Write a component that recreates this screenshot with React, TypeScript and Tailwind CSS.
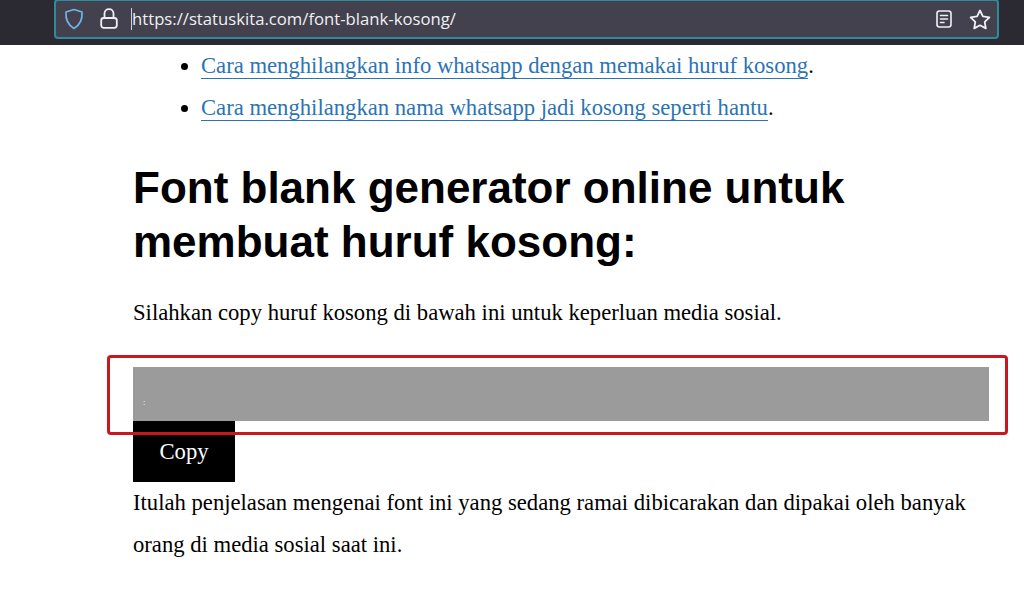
function ShieldIcon() {
  return (
    <svg width="20" height="22" viewBox="0 0 20 22" fill="none" stroke="#6fb6e6" strokeWidth="1.7" strokeLinejoin="round">
      <path d="M10 1.5 L18 4 C18.5 11 16 17 10 20.5 C4 17 1.5 11 2 4 Z" />
    </svg>
  );
}

function LockIcon() {
  return (
    <svg width="18" height="21" viewBox="0 0 18 21" fill="none" stroke="#f0f0f4" strokeWidth="1.8">
      <path d="M4.5 10 V5.5 C4.5 3 6.5 1.2 9 1.2 C11.5 1.2 13.5 3 13.5 5.5 V10" />
      <rect x="1.2" y="10" width="15.6" height="9.8" rx="2.5" />
    </svg>
  );
}

function ReaderIcon() {
  return (
    <svg width="16" height="18" viewBox="0 0 16 18" fill="none" stroke="#f0f0f4" strokeWidth="1.6" strokeLinecap="round">
      <rect x="1" y="1" width="14" height="16" rx="2.5" />
      <path d="M4.5 5.5 H11.5 M4.5 9 H11.5 M4.5 12.5 H8" />
    </svg>
  );
}

function StarIcon() {
  return (
    <svg width="22" height="21" viewBox="0 0 22 21" fill="none" stroke="#f0f0f4" strokeWidth="1.8" strokeLinejoin="round">
      <path d="M11 1.5 L13.9 7.4 L20.4 8.3 L15.7 12.9 L16.8 19.4 L11 16.3 L5.2 19.4 L6.3 12.9 L1.6 8.3 L8.1 7.4 Z" />
    </svg>
  );
}

function UrlBar() {
  return (
    <div className="bg-[#2b2a33] h-[45px] pl-[54px] pr-[25px] overflow-hidden">
      <div className="h-[40px] -mt-px flex items-center border-[2.5px] border-[#2f8a9e] rounded-[4px] bg-[#42414d] pl-[8px] pr-[6px]">
        <ShieldIcon />
        <div className="ml-[16px] -mt-[1px]"><LockIcon /></div>
        <span className="ml-[13px] w-px h-[22px] bg-[#d0d0d6]" />
        <span className="text-[#f0f0f4] text-[16.7px] font-['Open_Sans',sans-serif]">https://statuskita.com/font-blank-kosong/</span>
        <div className="ml-auto flex items-center gap-[17px]">
          <ReaderIcon />
          <StarIcon />
        </div>
      </div>
    </div>
  );
}

export default function App() {
  return (
    <div className="relative w-[1024px] h-[594px] overflow-hidden bg-white font-['Liberation_Serif',serif] text-black">
      <UrlBar />
      <div className="pl-[133px] w-[989px] box-content">
        <ul className="list-disc pl-[68px] text-[22.67px] leading-[42px]">
          <li>
            <a className="text-[#2b74b4] border-b border-[#2b74b4]">Cara menghilangkan info whatsapp dengan memakai huruf kosong</a>.
          </li>
          <li>
            <a className="text-[#2b74b4] border-b border-[#2b74b4]">Cara menghilangkan nama whatsapp jadi kosong seperti hantu</a>.
          </li>
        </ul>
        <h2 className="mt-[32px] font-['Liberation_Sans',sans-serif] font-bold text-[44px] leading-[54px]">
          Font blank generator online untuk<br />membuat huruf kosong:
        </h2>
        <p className="mt-[23px] text-[22.67px] leading-[42px]">Silahkan copy huruf kosong di bawah ini untuk keperluan media sosial.</p>
        <div className="mt-[33px] w-[856px] h-[54px] bg-[#9b9b9b] pl-[10px] pt-[31px] text-[8px] leading-[10px] text-white">:</div>
        <button className="block w-[102px] h-[61px] bg-black text-white text-[22.67px]">Copy</button>
        <p className="w-[856px] text-[22.67px] leading-[42px]">
          Itulah penjelasan mengenai font ini yang sedang ramai dibicarakan dan dipakai oleh banyak orang di media sosial saat ini.
        </p>
      </div>
      {/* annotation drawn over the page */}
      <div className="absolute left-[107px] top-[355px] w-[901px] h-[80px] border-[3px] border-[#c8171f] rounded-[4px]" />
    </div>
  );
}
